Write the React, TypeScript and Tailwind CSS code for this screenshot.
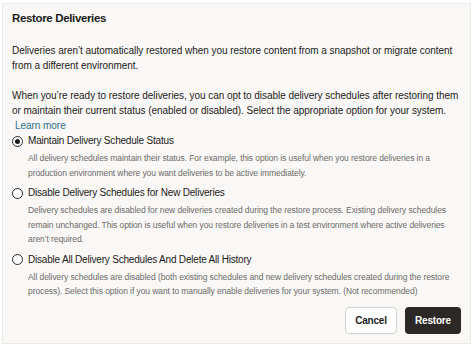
import React, { useState } from "react";

const options = [
  {
    label: "Maintain Delivery Schedule Status",
    desc: "All delivery schedules maintain their status. For example, this option is useful when you restore deliveries in a production environment where you want deliveries to be active immediately.",
  },
  {
    label: "Disable Delivery Schedules for New Deliveries",
    desc: "Delivery schedules are disabled for new deliveries created during the restore process. Existing delivery schedules remain unchanged. This option is useful when you restore deliveries in a test environment where active deliveries aren\u2019t required.",
  },
  {
    label: "Disable All Delivery Schedules And Delete All History",
    desc: "All delivery schedules are disabled (both existing schedules and new delivery schedules created during the restore process). Select this option if you want to manually enable deliveries for your system. (Not recommended)",
  },
];

export default function App() {
  const [sel, setSel] = useState(0);
  return (
    <div
      className="w-[474px] h-[347px] bg-white pt-[3px] pl-[2px] overflow-hidden"
      style={{ fontFamily: '"Liberation Sans", Arial, sans-serif' }}
    >
      <div className="w-[469px] h-[341px] bg-[#f9f8f6] border border-[#eceae7] pl-[9px] pr-[8px] pt-[6px] text-[#1d1b19]">
        <h1 className="text-[11.5px] tracking-[-0.35px] font-bold leading-[16px]">Restore Deliveries</h1>
        <p className="mt-[17px] pr-[2px] text-[10px] tracking-[-0.05px] leading-[15px]">
          Deliveries aren&rsquo;t automatically restored when you restore content from a snapshot or migrate content from a different environment.
        </p>
        <p className="mt-[15px] pr-[2px] text-[10px] tracking-[-0.05px] leading-[15px]">
          When you&rsquo;re ready to restore deliveries, you can opt to disable delivery schedules after restoring them or maintain their current status (enabled or disabled). Select the appropriate option for your system.
          <br />
          <span className="ml-[3px] text-[#2c6e8f]">Learn more</span>
        </p>
        <div className="flex flex-col gap-[5px]">
          {options.map((o, i) => (
            <div key={i} className="flex flex-col">
              <button
                className="flex items-center gap-[5px] h-[16px] text-left cursor-pointer"
                onClick={() => setSel(i)}
              >
                <span className="w-[11px] h-[11px] rounded-full border border-[#2a2826] flex items-center justify-center shrink-0 bg-white">
                  {sel === i && <span className="w-[5px] h-[5px] rounded-full bg-[#1d1b19]" />}
                </span>
                <span className="text-[10px] tracking-[-0.2px] leading-[16px]">{o.label}</span>
              </button>
              <p className="mt-[2px] ml-[16px] pr-[6px] text-[8.5px] tracking-[-0.08px] leading-[14.5px] text-[#6d6b68]">{o.desc}</p>
            </div>
          ))}
        </div>
        <div className="mt-[8px] flex justify-end gap-[8px] pr-[1px]">
          <button className="h-[27px] w-[52px] rounded-[4px] border border-[#d4d1cc] bg-white text-[10px] tracking-[-0.2px] font-bold text-[#1d1b19]">
            Cancel
          </button>
          <button className="h-[27px] w-[56px] rounded-[4px] bg-[#2c2826] text-[10px] tracking-[-0.2px] font-bold text-white">
            Restore
          </button>
        </div>
      </div>
    </div>
  );
}
